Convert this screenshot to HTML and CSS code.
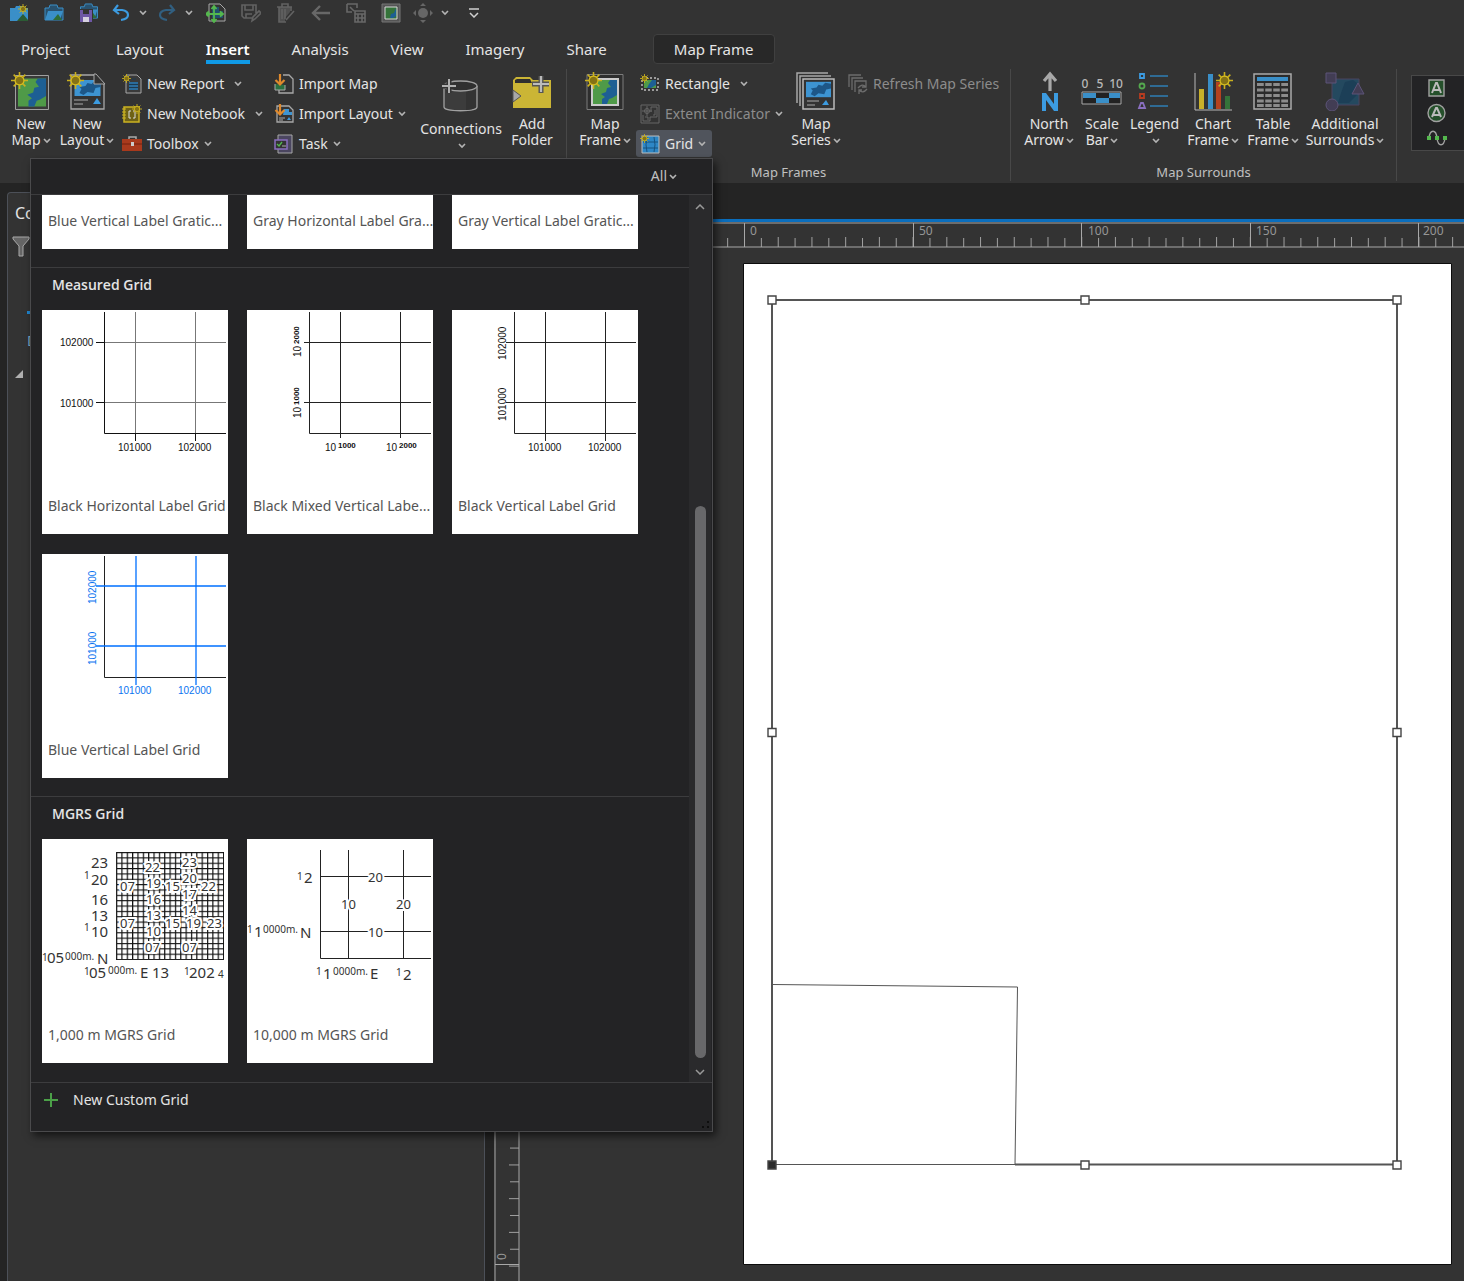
FILE: index.html
```html
<!DOCTYPE html>
<html lang="en">
<head>
<meta charset="utf-8">
<title>Layout - Insert</title>
<link rel="stylesheet" href="styles.css">
</head>
<body>
<svg class="defs" aria-hidden="true">
  <symbol id="chev" viewBox="0 0 8 6"><path d="M1 1l3 3 3-3" fill="none" stroke="#b4b4b4" stroke-width="1.6"/></symbol>
  <symbol id="sun" viewBox="0 0 16 16"><path d="M8 0v16M0 8h16M2.5 2.5l11 11M13.500 2.500l-11 11" stroke="#c9b01e" stroke-width="1.5"/><circle cx="8" cy="8" r="4.200" fill="#857215" stroke="#d8bd20" stroke-width="1.200"/></symbol>
  <symbol id="terrain" viewBox="0 0 24 24"><path fill="#4f9a48" d="M0 0h24v24H0z"/><path fill="#1d5f94" d="M17 0h7v15l-5 3-3 1-2 5H9v-5l3-2-4-3 5-2 1-4 4-1-3-4z"/></symbol>
  <symbol id="blueterrain" viewBox="0 0 26 16"><path fill="#3d94d2" d="M0 0h26v16H0z"/><path fill="#1d5788" d="M13 3l4 1 3-3 6 1v5l-5 1-2 5-6-1-4 3-4-2 2-4-2-2 6-1z"/></symbol>
  <symbol id="folder" viewBox="0 0 20 18"><path d="M1 16V4h4l1-3h7l1 3h5v12z" fill="#29526f" stroke="#3a8fc8"/><path d="M1 16l3-9h15l-3 9z" fill="#3a8fc8"/><path d="M9 16l5-6 4 6z" fill="#2e6e37"/></symbol>
</svg>

<header class="app-head">
  <div class="quick">
    <button class="q" aria-label="New project"><svg width="20" height="20"><path d="M1 18V5h5l1-2h6l1 2h5v13z" fill="#3a8fc8"/><path d="M8 18l6-7 5 6v1z" fill="#2b5c34"/><use href="#sun" x="9" y="1" width="10" height="10"/></svg></button>
    <button class="q" aria-label="Open project"><svg width="20" height="18"><use href="#folder"/></svg></button>
    <button class="q" aria-label="Save project"><svg width="20" height="20"><use href="#folder" width="20" height="17"/><path d="M0 6h14v14H0z" fill="#333"/><path d="M1 7h12v12H1z" fill="#6e57a5"/><path d="M4 7h6v4H4z" fill="#333"/><path d="M4 14h6v5H4z" fill="#d5d0e0"/></svg></button>
    <span class="split"><button class="q" aria-label="Undo"><svg width="18" height="18"><path d="M6 1L2 6l5 4M2 6h8q6 1 6 5t-7 5" fill="none" stroke="#3c9be0" stroke-width="2.200"/></svg></button><button class="q arrow" aria-label="Undo list"><svg width="8" height="6"><use href="#chev"/></svg></button></span>
    <span class="split"><button class="q" aria-label="Redo"><svg width="18" height="18"><path d="M12 1l4 5-5 4M16 6H8Q2 7 2 11t7 5" fill="none" stroke="#315f80" stroke-width="2.200"/></svg></button><button class="q arrow" aria-label="Redo list"><svg width="8" height="6"><use href="#chev"/></svg></button></span>
    <button class="q" aria-label="Full extent"><svg width="20" height="20"><path d="M3 1h11l5 5v12H3z" fill="none" stroke="#a8a8a8"/><path d="M6 4h7v4h4v7H6z" fill="#214f6c"/><path d="M8 3v16M0 11h17M5.500 6L8 3l2.500 3M5.500 16L8 19l2.500-3M3 8.500L0 11l3 2.500M14 8.500l3 2.500-3 2.500" fill="none" stroke="#54b84e" stroke-width="1.800"/></svg></button>
    <button class="q" aria-label="Save edits"><svg width="20" height="20" fill="none" stroke="#626262" stroke-width="1.600"><path d="M11 15H3l-2-2V2h14v8M4 2v5h8V2M5 15v-4h6M11 18l1-4 6-6 2 2-6 6z"/></svg></button>
    <button class="q" aria-label="Discard edits"><svg width="20" height="20" fill="none" stroke="#626262" stroke-width="1.600"><path d="M3 4h11v5l-5 6v4H3z" fill="#505050" stroke="none"/><path d="M10 19H3V4h12v4M1 4h15M6 4V1h6v3M6 6v10M9 6v10M10 17l8-9"/></svg></button>
    <button class="q" aria-label="Back"><svg width="20" height="20"><path d="M19 10H2M9 3l-7 7 7 7" fill="none" stroke="#686868" stroke-width="2.400"/></svg></button>
    <button class="q" aria-label="Attribute table"><svg width="20" height="20" fill="none" stroke="#686868" stroke-width="1.600"><path d="M1 1h10v4M1 1v8h5M4 4l4 4M9 8h10v11H9zM9 11h10M9 15h10M12 11v8M16 11v8"/></svg></button>
    <button class="q" aria-label="Map frame"><svg width="20" height="20"><path d="M1 1h18v18H1z" fill="#555" stroke="#777"/><path d="M4 4h12v12H4z" fill="#35733a" stroke="#d8d8d8"/><path d="M15 5v8l-3 2H9l1-4 3-1z" fill="#1d5f94"/></svg></button>
    <span class="split"><button class="q" aria-label="Navigate"><svg width="20" height="20" fill="#666"><circle cx="10" cy="10" r="5"/><path d="M10 0l3 3H7zM10 20l3-3H7zM0 10l3-3v6zM20 10l-3-3v6z"/></svg></button><button class="q arrow" aria-label="Navigate list"><svg width="8" height="6"><use href="#chev"/></svg></button></span>
    <button class="q last" aria-label="Customize toolbar"><svg width="12" height="10"><path d="M1 1h10M2 5l4 4 4-4" fill="none" stroke="#d0d0d0" stroke-width="1.500"/></svg></button>
  </div>
  <nav class="tabs">
    <a href="#project" class="first">Project</a><a href="#layout">Layout</a><a href="#insert" class="on">Insert</a><a href="#analysis">Analysis</a><a href="#view">View</a><a href="#imagery">Imagery</a><a href="#share">Share</a><a href="#frame" class="context">Map Frame</a>
  </nav>
</header>

<div class="ribbon">
  <section class="group project">
    <div class="tools">
      <button class="big"><svg width="40" height="40"><path d="M4.500 4.500h33v34h-33z" fill="#3a3a3a" stroke="#a0a0a0"/><use href="#terrain" x="7" y="7" width="28" height="29"/><use href="#sun" x="0" y="1" width="17" height="17"/></svg><span>New<br>Map<svg class="cv"><use href="#chev"/></svg></span></button>
      <button class="big"><svg width="40" height="40"><path d="M4 4h24l9 9v25H4z" fill="#333" stroke="#a8a8a8" stroke-width="1.300"/><use href="#blueterrain" x="7" y="9" width="27" height="16"/><path d="M27 3h2l9 10H27z" fill="#333" stroke="#a8a8a8"/><path d="M7 29h14M7 33h9" stroke="#aaa"/><path d="M26 33h8l-4-6z" fill="#3c9be0"/><use href="#sun" x="0" y="1" width="17" height="17"/></svg><span>New<br>Layout<svg class="cv"><use href="#chev"/></svg></span></button>
      <div class="stack">
        <button class="small"><svg width="20" height="20"><path d="M4 1h11l4 4v14H4z" fill="#3a3a3a" stroke="#a8a8a8"/><path d="M7 8h9v8H7z" fill="#2b6c9c"/><path d="M10 5h4M7 10.500h9M7 13.500h9" stroke="#1c3a50"/><use href="#sun" width="9" height="9"/></svg>New Report<svg class="cv wide"><use href="#chev"/></svg></button>
        <button class="small"><svg width="20" height="20"><path d="M2 3h15v15H2z" fill="#6f6216" stroke="#ccb322" stroke-width="1.500"/><path d="M0 5h4M0 8h4M0 11h4M0 14h4" stroke="#ccb322"/><path d="M9 7H7v7h2M11 7h2v7h-2" stroke="#ddd" fill="none"/><use href="#sun" x="10" y="0" width="10" height="10"/></svg>New Notebook<svg class="cv wide"><use href="#chev"/></svg></button>
        <button class="small"><svg width="20" height="20"><path d="M7 5V3h7v2" fill="none" stroke="#aaa" stroke-width="1.500"/><path d="M0 5h20v12H0z" fill="#a93a1d"/><path d="M0 10h20" stroke="#74200e"/><path d="M9 8h3v4H9z" fill="#ccc"/></svg>Toolbox<svg class="cv"><use href="#chev"/></svg></button>
      </div>
      <div class="stack">
        <button class="small"><svg width="20" height="20"><path d="M9 1h6l4 4v14H5v-8" fill="none" stroke="#a8a8a8" stroke-width="1.300"/><path d="M1 10v6h10v-5" fill="#2c7040" stroke="#a8a8a8"/><path d="M6 0v10M1.500 6L6 10.500 10.500 6" fill="none" stroke="#e08a2c" stroke-width="2.200"/></svg>Import Map</button>
        <button class="small"><svg width="20" height="20"><path d="M3 2h12l4 4v12H3z" fill="#333" stroke="#a8a8a8" stroke-width="1.300"/><path d="M10 5h5v3h3v3H9z" fill="#3d94d2"/><path d="M5 14h6M5 16h4" stroke="#aaa"/><path d="M13 16h4l-2-3z" fill="#3c9be0"/><path d="M6 0v10M1.500 6L6 10.500 10.500 6" fill="none" stroke="#e08a2c" stroke-width="2.200"/></svg>Import Layout<svg class="cv"><use href="#chev"/></svg></button>
        <button class="small"><svg width="20" height="20"><path d="M4 1h14v18H4z" fill="#4b4660" stroke="#a8a8a8"/><path d="M1 6h12v9H1z" fill="#333" stroke="#8a6fc0" stroke-width="1.500"/><path d="M3 10l2 2 3-4" fill="none" stroke="#54b84e" stroke-width="1.300"/><path d="M8 12h4" stroke="#aaa"/></svg>Task<svg class="cv"><use href="#chev"/></svg></button>
      </div>
      <button class="big low"><svg width="40" height="40"><path d="M3 10v21c0 5 33 5 33 0V10" fill="#3c3c3c" stroke="#a0a0a0" stroke-width="1.300"/><path d="M25 14h10v17q-3 3-10 3z" fill="#333"/><ellipse cx="19.500" cy="10" rx="16.500" ry="5" fill="#303030" stroke="#a0a0a0" stroke-width="1.300"/><path d="M8 3v14M1 10h14" stroke="#333" stroke-width="5"/><path d="M8 3v14M1 10h14" stroke="#b0b0b0" stroke-width="2"/></svg><span>Connections<br><svg class="cv"><use href="#chev"/></svg></span></button>
      <button class="big"><svg width="42" height="40"><path d="M2 37V9l3-3h14l3 3h18v28z" fill="#cbb535"/><path d="M4 12V9l2-1h13l2 4z" fill="#2f2f2f"/><path d="M2 19l8 6-8 6z" fill="#a8a8a8" stroke="#555"/><path d="M30 5v17M21 13h17" stroke="#555" stroke-width="5"/><path d="M30 5v16M22 13h16" stroke="#bbb" stroke-width="2.200"/></svg><span>Add<br>Folder</span></button>
    </div>
    <h2>Project</h2>
  </section>
  <section class="group frames">
    <div class="tools">
      <button class="big"><svg width="40" height="40"><path d="M2 3.500h36v35H2z" fill="#2e2e2e" stroke="#7c7c7c"/><path d="M7 8h26v26H7z" stroke="#ccc" stroke-width="2"/><use href="#terrain" x="8" y="9" width="24" height="24"/><use href="#sun" x="0" y="1" width="17" height="17"/></svg><span>Map<br>Frame<svg class="cv"><use href="#chev"/></svg></span></button>
      <div class="stack">
        <button class="small"><svg width="20" height="20"><path d="M2 4h16v12H2z" fill="none" stroke="#c0c0c0" stroke-width="1.400" stroke-dasharray="2 2"/><path d="M4 6h12v8H4z" fill="#4f9a48"/><path d="M12 6h4v5l-5 3H7l2-4z" fill="#1d5f94"/><use href="#sun" width="9" height="9"/></svg>Rectangle<svg class="cv wide"><use href="#chev"/></svg></button>
        <button class="small" disabled><svg width="20" height="20" fill="none" stroke="#666"><path d="M1 1h18v18H1zM3 11v6h7v-4h7V3h-6v5M5 13h3v3M13 11h2V6"/><circle cx="7" cy="7" r="2.500"/><path d="M7 2v10M2 7h10"/></svg>Extent Indicator<svg class="cv"><use href="#chev"/></svg></button>
        <button class="small open"><svg width="20" height="20"><path d="M2 2h17v17H2z" fill="#2e87c6" stroke="#bbb"/><path d="M7 3q-2 8 0 15M14 3q2 8 0 15M3 8h15M3 14h15" fill="none" stroke="#17527f"/><use href="#sun" width="9" height="9"/></svg>Grid<svg class="cv"><use href="#chev"/></svg></button>
      </div>
      <button class="big"><svg width="40" height="40"><path d="M1 32V2h31M4 35V5h31" fill="none" stroke="#a8a8a8" stroke-width="1.500"/><path d="M7 8h31v30H7z" fill="#333" stroke="#bbb" stroke-width="1.500"/><use href="#blueterrain" x="10" y="10" width="25" height="17"/><path d="M11 30h12M11 34h8" stroke="#aaa"/><path d="M26 34h7l-3-5z" fill="#3c9be0"/></svg><span>Map<br>Series<svg class="cv"><use href="#chev"/></svg></span></button>
      <div class="stack">
        <button class="small" disabled><svg width="20" height="20" fill="none" stroke="#6c6c6c" stroke-width="1.300"><path d="M1 13V1h12M4 16V4h11M7 18V7h11v3M10 14q4-5 8-1M18 9v4h-4M19 15q-4 5-8 1M11 20v-4h3"/></svg>Refresh Map Series</button>
      </div>
    </div>
    <h2>Map Frames</h2>
  </section>
  <section class="group surrounds">
    <div class="tools">
      <button class="big"><svg width="40" height="40"><path d="M21 20V4M15 10l6-7 6 7" fill="none" stroke="#a8a8a8" stroke-width="3.200"/><path d="M13 40V22h4l8 11V22h4v18h-4l-8-11v11z" fill="#3c9be0"/></svg><span>North<br>Arrow<svg class="cv"><use href="#chev"/></svg></span></button>
      <button class="big"><svg width="42" height="40"><g font-size="12" font-weight="500" fill="#b8b8b8" text-anchor="middle"><text x="4" y="17">0</text><text x="19" y="17">5</text><text x="35" y="17">10</text></g><path d="M1 21h39v12H1z" fill="#222" stroke="#a8a8a8"/><path d="M2 22h13v5h13v-5h11v5H28v5H15v-5H2z" fill="#3a8fc8"/></svg><span>Scale<br>Bar<svg class="cv"><use href="#chev"/></svg></span></button>
      <button class="big"><svg width="40" height="40"><g fill="none" stroke-width="1.800"><path d="M5 3h4v4H5z" stroke="#3c9be0"/><circle cx="7" cy="15" r="2.500" stroke="#54a84e"/><path d="M5 23h4v4H5z" stroke="#b83c20"/><path d="M6 32h2l2 5H4z" stroke="#8a6fc0"/><path d="M15 5h18M15 15h18M15 25h18M15 35h18" stroke="#2f7fb5" stroke-width="1.500"/></g></svg><span>Legend<br><svg class="cv"><use href="#chev"/></svg></span></button>
      <button class="big"><svg width="40" height="40"><path d="M6 18h5v20H6z" fill="#c8b02a"/><path d="M15 3h5v35h-5z" fill="#3a8fc8"/><path d="M23 11h5v27h-5z" fill="#b5421f"/><path d="M32 25h5v13h-5z" fill="#35733a"/><path d="M2 2v37h37" fill="none" stroke="#b8b8b8"/><use href="#sun" x="23" y="1" width="17" height="17"/></svg><span>Chart<br>Frame<svg class="cv"><use href="#chev"/></svg></span></button>
      <button class="big"><svg width="40" height="40"><path d="M1 3h37v35H1z" fill="#2b2b2b" stroke="#aaa" stroke-width="1.500"/><path d="M4 6h31v4H4z" fill="#3a8fc8"/><path d="M4 13.500h31M4 19h31M4 24.500h31M4 30h31M4 34.500h31" stroke="#8c8c8c" stroke-width="3"/><path d="M11.500 11v25M19.500 11v25M27.500 11v25" stroke="#2b2b2b" stroke-width="1.500"/></svg><span>Table<br>Frame<svg class="cv"><use href="#chev"/></svg></span></button>
      <button class="big"><svg width="40" height="40"><path d="M7 8h27v26H7z" fill="#24495f" stroke="#4b4560"/><path d="M20 11l8-2 4 3v12l-8 8H13l3-10z" fill="#1c3f57"/><g fill="#423d54" stroke="#5d5478"><path d="M1 2h10v10H1z"/><circle cx="7" cy="34" r="6"/><path d="M33 12l6 11H27z"/></g></svg><span>Additional<br>Surrounds<svg class="cv"><use href="#chev"/></svg></span></button>
    </div>
    <h2>Map Surrounds</h2>
  </section>
  <section class="shapes">
    <button aria-label="Rectangle text"><svg width="20" height="20"><path d="M2 2h15v16H2z" fill="#25502b" stroke="#a0a0a0" stroke-width="1.400"/><path d="M5 15l4-10h1l4 10M6.500 12h6" fill="none" stroke="#bbb" stroke-width="2"/></svg></button>
    <button aria-label="Circle text"><svg width="20" height="20"><circle cx="9.500" cy="10" r="8.500" fill="#25502b" stroke="#a0a0a0" stroke-width="1.400"/><path d="M5 14l4-9h1l4 9M6.500 12h6" fill="none" stroke="#bbb" stroke-width="2"/></svg></button>
    <button aria-label="Curve text"><svg width="20" height="20"><path d="M2 10C3 1 9 1 10 10s7 9 8 0" fill="none" stroke="#a0a0a0" stroke-width="1.400"/><path d="M0 8h4v4H0zM8 8h4v4H8zM16 8h4v4h-4z" fill="#54b84e"/></svg></button>
  </section>
</div>

<main class="work">
  <aside class="contents">
    <h1>Contents</h1>
    <svg class="filter" width="18" height="22"><path d="M1 1h16v2l-6 7v10H7V10L1 3z" fill="#666" stroke="#aaa"/></svg>
    <div class="bar"></div>
    <p>Drawing Order</p>
    <svg class="node" width="8" height="8"><path d="M8 0v8H0z" fill="#b0b0b0"/></svg>
  </aside>
  <section class="view">
    <div class="viewtabs"></div>
    <svg class="ruler-h" width="100%" height="26">
      <defs><pattern id="th" x="250" width="33.720" height="26" patternUnits="userSpaceOnUse"><path d="M.5 15v10M17.360 16v9" stroke="#a0a0a0"/></pattern></defs>
      <rect y="1" width="100%" height="24" fill="url(#th)"/>
      <path d="M0 1h3000M0 25h3000" stroke="#a8a8a8"/>
      <path d="M250.500 1v24M419.500 1v24M587.500 1v24M756.500 1v24M924.500 1v24" stroke="#a8a8a8"/>
      <g fill="#969696" font-size="12"><text x="256" y="13">0</text><text x="425" y="13">50</text><text x="594" y="13">100</text><text x="762" y="13">150</text><text x="929" y="13">200</text></g>
    </svg>
    <div class="canvas">
      <svg class="ruler-v" width="26">
        <defs><pattern id="tv" y="6" width="26" height="33.720" patternUnits="userSpaceOnUse"><path d="M15 .5h10M16 17.360h9" stroke="#a0a0a0"/></pattern></defs>
        <rect width="26" height="100%" fill="url(#tv)"/>
        <path d="M1 0v3000M25 0v3000M1 1016.500h24" stroke="#a8a8a8"/>
        <text x="-1012" y="12" transform="rotate(-90)" fill="#969696" font-size="12">0</text>
      </svg>
      <svg class="page" viewBox="0 0 709 1002">
        <path d="M.5.5h708v1001H.5z" fill="#fff" stroke="#0c0c0c"/>
        <path d="M29 901.500V37h625v864.500H272" fill="none" stroke="#555" stroke-width="2"/>
        <path d="M29.500 721.500l245 2.500-2.500 177.500H29V721" fill="none" stroke="#555"/>
        <g fill="#fff" stroke="#444" stroke-width="1.400"><path d="M25 33h8v8h-8zM338 33h8v8h-8zM650 33h8v8h-8zM25 465.500h8v8h-8zM650 465.500h8v8h-8zM338 898h8v8h-8zM650 898h8v8h-8z"/><path fill="#2c2c2c" d="M25 898h8v8h-8z"/></g>
      </svg>
    </div>
  </section>
</main>

<div class="popup">
  <div class="filterbar"><button>All<svg class="cv"><use href="#chev"/></svg></button></div>
  <div class="scroller">
    <div class="list">
      <div class="cards">
        <button class="card"><span>Blue Vertical Label Gratic...</span></button>
        <button class="card"><span>Gray Horizontal Label Gra...</span></button>
        <button class="card"><span>Gray Vertical Label Gratic...</span></button>
      </div>
      <h3>Measured Grid</h3>
      <div class="cards">
        <button class="card"><svg width="185" height="160"><path d="M62 32.500h122M62 92.500h122M93.500 2v121M153.500 2v121" stroke="#777"/><path d="M62.500 2v121.500H184M54 32.500h8M54 92.500h8M93.500 123v8M153.500 123v8" fill="none" stroke="#111"/><g class="n"><text x="18" y="36">102000</text><text x="18" y="97">101000</text><text x="76" y="141">101000</text><text x="136" y="141">102000</text></g></svg><span>Black Horizontal Label Grid</span></button>
        <button class="card"><svg width="185" height="160"><path d="M57 32.500h127M57 92.500h127M93.500 2v126M153.500 2v126M62.500 2v121.500H184" fill="none" stroke="#222"/><g class="n"><text x="78" y="141">10</text><text x="139" y="141">10</text><text transform="translate(54 47) rotate(-90)">10</text><text transform="translate(54 108) rotate(-90)">10</text></g><g class="n tiny"><text x="91" y="138">1000</text><text x="152" y="138">2000</text><text transform="translate(52 34) rotate(-90)">2000</text><text transform="translate(52 95) rotate(-90)">1000</text></g></svg><span>Black Mixed Vertical Labe...</span></button>
        <button class="card"><svg width="185" height="160"><path d="M54 32.500h130M54 92.500h130M93.500 2v129M153.500 2v129M62.500 2v121.500H184" fill="none" stroke="#222"/><g class="n"><text x="76" y="141">101000</text><text x="136" y="141">102000</text><text transform="translate(54 50) rotate(-90)">102000</text><text transform="translate(54 111) rotate(-90)">101000</text></g></svg><span>Black Vertical Label Grid</span></button>
        <button class="card"><svg width="185" height="160"><path d="M62.500 2v121.500H184" fill="none" stroke="#222"/><path d="M54 32h130M54 92h130M94 2v129M154 2v129" stroke="#0070ff" stroke-width="1.300"/><g class="n blue"><text x="76" y="140">101000</text><text x="136" y="140">102000</text><text transform="translate(54 50) rotate(-90)">102000</text><text transform="translate(54 111) rotate(-90)">101000</text></g></svg><span>Blue Vertical Label Grid</span></button>
      </div>
      <h3>MGRS Grid</h3>
      <div class="cards">
        <button class="card"><svg width="185" height="160">
          <defs><pattern id="mesh" x="74" y="13" width="5.350" height="5.350" patternUnits="userSpaceOnUse"><path d="M.6 0v5.350M0 .6h5.350" stroke="#111" stroke-width="1.200"/></pattern></defs>
          <path d="M74 13h108v108H74z" fill="url(#mesh)"/><path d="M74.500 13v107.500H182" fill="none" stroke="#222"/>
          <g class="m halo"><text x="103" y="33">22</text><text x="140" y="28">23</text><text x="140" y="44">20</text><text x="104" y="49">19</text><text x="78" y="52">07</text><text x="123" y="52">15</text><text x="159" y="52">22</text><text x="104" y="65">16</text><text x="140" y="60">17</text><text x="104" y="81">13</text><text x="140" y="76">14</text><text x="78" y="89">07</text><text x="123" y="89">15</text><text x="144" y="89">19</text><text x="165" y="89">23</text><text x="104" y="97">10</text><text x="103" y="113">07</text><text x="140" y="113">07</text></g>
          <g class="m"><text x="49" y="29">23</text><text x="49" y="46">20</text><text x="49" y="66">16</text><text x="49" y="82">13</text><text x="49" y="98">10</text><text x="5" y="124">05</text><text x="55" y="125">N</text><text x="47" y="139">05</text><text x="98" y="139">E</text><text x="110" y="139">13</text><text x="147" y="139">202</text></g>
          <g class="m sup"><text x="42" y="40">1</text><text x="42" y="92">1</text><text x="0" y="122">1</text><text x="23" y="121">000m.</text><text x="42" y="136">1</text><text x="66" y="135">000m.</text><text x="142" y="136">1</text><text x="176" y="139">4</text></g>
        </svg><span>1,000 m MGRS Grid</span></button>
        <button class="card"><svg width="185" height="160"><path d="M73.500 11v108.500H184M101.500 11v109M156.500 11v109M73 37.500h111M73 92.500h111" fill="none" stroke="#222"/>
          <g class="m halo"><text x="121" y="43">20</text><text x="121" y="98">10</text><text x="94" y="70">10</text><text x="149" y="70">20</text></g>
          <g class="m"><text x="57" y="44">2</text><text x="7" y="98">1</text><text x="53" y="99">N</text><text x="76" y="140">1</text><text x="123" y="140">E</text><text x="156" y="141">2</text></g>
          <g class="m sup"><text x="50" y="41">1</text><text x="0" y="94">1</text><text x="16" y="94">0000m.</text><text x="69" y="136">1</text><text x="86" y="136">0000m.</text><text x="149" y="137">1</text></g>
        </svg><span>10,000 m MGRS Grid</span></button>
      </div>
    </div>
    <div class="bar-v">
      <svg width="10" height="6"><path d="M1 5l4-4 4 4" fill="none" stroke="#999" stroke-width="1.500"/></svg>
      <i></i>
      <svg width="10" height="6"><path d="M1 1l4 4 4-4" fill="none" stroke="#999" stroke-width="1.500"/></svg>
    </div>
  </div>
  <div class="foot"><button><svg width="16" height="16"><path d="M8 1v14M1 8h14" stroke="#4ba048" stroke-width="2"/></svg>New Custom Grid</button><svg class="grip" width="8" height="8"><path d="M5 0h2v2H5zM0 5h2v2H0zM5 5h2v2H5z" fill="#0e0e0e"/></svg></div>
</div>
</body>
</html>
```
FILE: styles.css
```css
* { box-sizing: border-box; }
body {
  margin: 0;
  min-height: 100vh;
  display: flex;
  flex-direction: column;
  position: relative;
  overflow-x: hidden;
  background: #333;
  color: #e4e4e4;
  font: 14px/16px "Noto Sans", "Open Sans", sans-serif;
}
.defs { display: none; }
button {
  font: inherit;
  color: inherit;
  background: none;
  border: 0;
  padding: 0;
  white-space: nowrap;
}
svg { flex: none; }
h1, h2, h3, p { margin: 0; font-weight: 400; }

.quick { display: flex; height: 26px; padding-left: 1px; }
.q { width: 35px; display: flex; align-items: center; justify-content: center; }
.q.last { width: 40px; }
.split { display: flex; width: 46px; }
.split .q { width: 30px; }
.split .arrow { width: 14px; }

.tabs { display: flex; gap: 42px; height: 43px; padding: 8px 21px 0; font-size: 15px; }
.tabs a { color: inherit; text-decoration: none; height: 30px; line-height: 30px; }
.tabs .first { margin-right: 4px; }
.tabs a.on { font-weight: 600; border-bottom: 4px solid #109ae6; color: #fff; }
.tabs .context { margin-left: 4px; padding: 0 20px; line-height: 28px; background: #282828; border: 1px solid #404040; border-radius: 4px; }

.ribbon { display: flex; height: 114px; }
.group { flex: none; display: flex; flex-direction: column; border-right: 1px solid #484848; margin-bottom: 2px; }
.group h2 { text-align: center; font-size: 13px; line-height: 17px; color: #c0c0c0; }
.tools { flex: none; display: grid; height: 95px; }
.project { width: 567px; }
.project .tools { grid-template-columns: 54px 58px 152px 144px 98px 44px; padding-left: 4px; }
.frames { width: 444px; }
.frames .tools { grid-template-columns: 58px 156px 52px 160px; padding-left: 9px; }
.surrounds { width: 386px; }
.surrounds .tools { grid-template-columns: 54px 52px 53px 64px 56px 88px; padding-left: 11px; }
.big { display: flex; flex-direction: column; align-items: center; padding-top: 2px; gap: 5px; }
.big.low { padding-top: 7px; }
.cv { width: 8px; height: 6px; margin-left: 2px; vertical-align: middle; }
.small .cv { margin-left: 5px; }
.small .cv.wide { margin-left: 10px; }
.stack { display: flex; flex-direction: column; align-items: flex-start; gap: 3px; padding-top: 1px; }
.small { display: flex; align-items: center; height: 27px; margin-left: 2px; padding: 0 6px 0 4px; border-radius: 3px; }
.small > svg:first-child { margin-right: 5px; }
.small:disabled { color: #8c8c8c; }
.small.open { background: #50545c; }
.shapes { flex: 1; margin: 6px 0 32px 14px; padding: 2px 15px; background: #232325; border: 1px solid #484848; border-right: 0; display: flex; flex-direction: column; gap: 5px; }
.shapes button { width: 20px; height: 20px; }

.work { flex: 1; display: flex; background: #242424; padding-left: 7px; }
.contents { width: 478px; margin-top: 9px; padding: 10px 7px; background: #333; border: 1px solid #4c5058; border-bottom: 0; border-radius: 4px 4px 0 0; display: flex; flex-direction: column; align-items: flex-start; }
.contents h1 { font-size: 16px; line-height: 20px; }
.filter { margin: 13px 0 53px -3px; }
.bar { width: 60px; height: 3px; margin-left: 12px; background: #1f86d0; }
.contents p { margin: 17px 0 19px 12px; line-height: 20px; color: #78a8c8; }
.view { flex: 1; min-width: 0; display: flex; flex-direction: column; margin-left: 9px; background: #333; }
.viewtabs { height: 39px; background: #242424; border-bottom: 3px solid #0a6ebd; }
.ruler-h { display: block; }
.canvas { flex: 1; display: flex; }
.ruler-v { height: auto; }
.page { flex: 1; min-width: 0; align-self: flex-start; margin: 15px 12px 15px 223px; }

.popup {
  position: absolute;
  left: 30px;
  top: 158px;
  width: 683px;
  background: #232325;
  border: 1px solid #4a4a4c;
  box-shadow: 3px 4px 8px rgba(0, 0, 0, .6);
}
.filterbar { height: 36px; padding: 0 35px 2px 0; display: flex; justify-content: flex-end; align-items: center; color: #c0c0c0; border-bottom: 1px solid #3c3c3e; }
.scroller { display: flex; height: 888px; border-bottom: 1px solid #3c3c3e; }
.list { flex: 1; overflow: hidden; display: flex; flex-direction: column; justify-content: flex-end; padding-bottom: 19px; }
.cards { flex: none; display: grid; grid-template-columns: repeat(3, 186px); gap: 20px 19px; padding-left: 11px; margin-bottom: 18px; }
.cards:last-child { margin-bottom: 0; }
.card { height: 224px; background: #fff; color: #555; display: flex; flex-direction: column; justify-content: flex-end; align-items: flex-start; }
.card > svg { display: block; margin-bottom: 27px; }
.card > span { padding-left: 6px; line-height: 18px; margin-bottom: 19px; }
.list h3 { flex: none; height: 43px; padding: 8px 21px; font-size: 14px; line-height: 18px; border-top: 1px solid #3c3c3e; font-family: "Open Sans", "Noto Sans", sans-serif; font-weight: 600; }
.n { font: 10px "Liberation Sans", sans-serif; fill: #111; }
.tiny { font-size: 8px; font-weight: 700; }
.blue { fill: #0a74f0; }
.m { font: 15px "Noto Sans", sans-serif; fill: #333; }
.halo { font-size: 13px; paint-order: stroke; stroke: #fff; stroke-width: 4px; }
.sup { font-size: 10px; }
.bar-v { width: 22px; margin-right: 1px; background: #2a2a2c; display: flex; flex-direction: column; align-items: center; padding: 9px 0 7px; }
.bar-v i { flex: none; width: 11px; height: 552px; margin: auto 0 11px; border-radius: 6px; background: #68686a; }
.foot { height: 48px; display: flex; justify-content: space-between; padding: 7px 2px 2px 12px; }
.foot button { height: 20px; display: flex; align-items: center; gap: 14px; }
.grip { align-self: flex-end; }
```
